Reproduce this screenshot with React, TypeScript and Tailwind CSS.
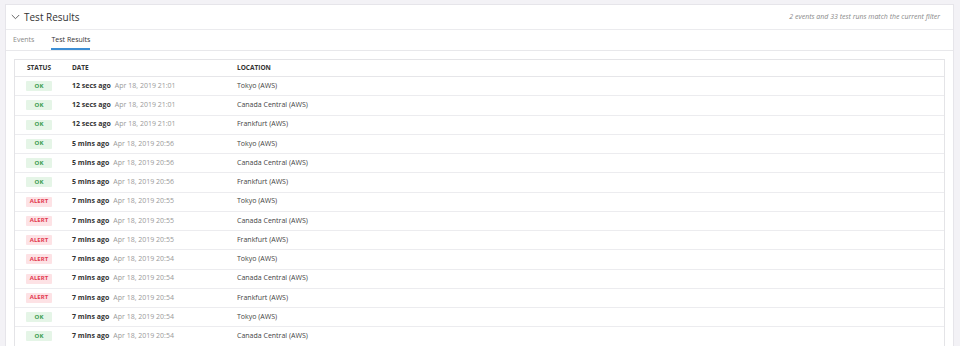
const ROWS: Array<{ ok: boolean; ago: string; at: string; loc: string }> = [
  { ok: true, ago: "12 secs ago", at: "Apr 18, 2019 21:01", loc: "Tokyo (AWS)" },
  { ok: true, ago: "12 secs ago", at: "Apr 18, 2019 21:01", loc: "Canada Central (AWS)" },
  { ok: true, ago: "12 secs ago", at: "Apr 18, 2019 21:01", loc: "Frankfurt (AWS)" },
  { ok: true, ago: "5 mins ago", at: "Apr 18, 2019 20:56", loc: "Tokyo (AWS)" },
  { ok: true, ago: "5 mins ago", at: "Apr 18, 2019 20:56", loc: "Canada Central (AWS)" },
  { ok: true, ago: "5 mins ago", at: "Apr 18, 2019 20:56", loc: "Frankfurt (AWS)" },
  { ok: false, ago: "7 mins ago", at: "Apr 18, 2019 20:55", loc: "Tokyo (AWS)" },
  { ok: false, ago: "7 mins ago", at: "Apr 18, 2019 20:55", loc: "Canada Central (AWS)" },
  { ok: false, ago: "7 mins ago", at: "Apr 18, 2019 20:55", loc: "Frankfurt (AWS)" },
  { ok: false, ago: "7 mins ago", at: "Apr 18, 2019 20:54", loc: "Tokyo (AWS)" },
  { ok: false, ago: "7 mins ago", at: "Apr 18, 2019 20:54", loc: "Canada Central (AWS)" },
  { ok: false, ago: "7 mins ago", at: "Apr 18, 2019 20:54", loc: "Frankfurt (AWS)" },
  { ok: true, ago: "7 mins ago", at: "Apr 18, 2019 20:54", loc: "Tokyo (AWS)" },
  { ok: true, ago: "7 mins ago", at: "Apr 18, 2019 20:54", loc: "Canada Central (AWS)" },
];

function Badge({ ok }: { ok: boolean }) {
  return ok ? (
    <span className="flex h-[10px] w-[26px] items-center justify-center rounded-[1px] bg-[#e5f5e7] text-[6px] font-bold text-[#3b9b4f]">
      OK
    </span>
  ) : (
    <span className="flex h-[10px] w-[26px] items-center justify-center rounded-[1px] bg-[#fde2e5] text-[6px] font-bold text-[#e23a50]">
      ALERT
    </span>
  );
}

export default function App() {
  return (
    <div className="h-[346px] overflow-hidden bg-[#f3f2f6] px-[5px] pt-[4px] font-['Open_Sans',sans-serif] text-[#333]">
      <div className="w-[949px] border border-[#e6e5ea] bg-white">
        <div className="flex h-[25px] items-center border-b border-[#ebebee] pl-[5px] pr-[13px]">
          <svg width="9" height="6" viewBox="0 0 9 6" className="mr-[4px]">
            <path d="M0.8 1 L4.5 4.7 L8.2 1" fill="none" stroke="#555" strokeWidth="0.9" />
          </svg>
          <span className="text-[10px] leading-none text-[#333]">Test Results</span>
          <span className="ml-auto text-[7px] italic text-[#888]">
            2 events and 33 test runs match the current filter
          </span>
        </div>
        <div className="flex h-[21px] items-stretch gap-[17px] border-b border-[#e8e8eb] pl-[7px] text-[7px]">
          <div className="flex items-center pt-[1px] text-[#8a8a8a]">Events</div>
          <div className="flex items-center border-b-2 border-[#3d8ed4] pt-[3px] text-[#333]">
            Test Results
          </div>
        </div>
        <div className="px-[8px] pt-[8px]">
          <div className="border border-[#e4e4e7] text-[7px]">
            <div className="flex h-[17px] items-center border-b border-[#e6e6e9] text-[6.5px] font-bold">
              <div className="w-[57px] pl-[11px]">
                <div className="w-[26px] text-center">STATUS</div>
              </div>
              <div className="w-[165px]">DATE</div>
              <div>LOCATION</div>
            </div>
            {ROWS.map((r, i) => (
              <div
                key={i}
                className="flex h-[19.25px] items-center border-b border-[#ececef]"
              >
                <div className="w-[57px] pl-[11px]">
                  <Badge ok={r.ok} />
                </div>
                <div className="flex w-[165px] items-baseline gap-[4px]">
                  <span className="font-bold text-[#333]">{r.ago}</span>
                  <span className="text-[#9a9a9a]">{r.at}</span>
                </div>
                <div className="text-[#444]">{r.loc}</div>
              </div>
            ))}
          </div>
        </div>
      </div>
    </div>
  );
}
